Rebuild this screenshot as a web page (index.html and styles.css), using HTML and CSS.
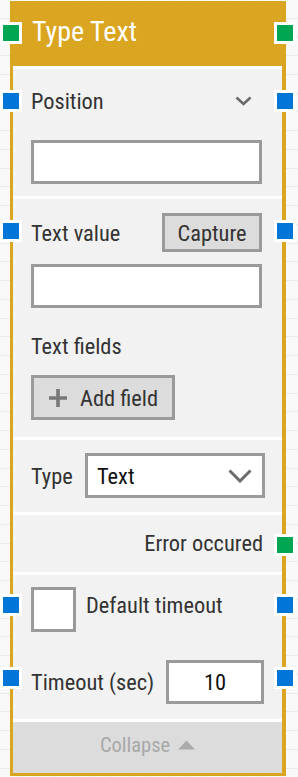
FILE: index.html
```html
<!DOCTYPE html>
<html lang="en">
<head>
<meta charset="utf-8">
<title>Type Text</title>
<link rel="stylesheet" href="styles.css">
</head>
<body>
<div class="node">
  <header class="node-head">
    <h1 class="node-title">Type Text</h1>
    <span class="port port-l port-green port-head"></span>
    <span class="port port-r port-green port-head"></span>
  </header>
  <div class="panel">
    <section class="row row-position">
      <div class="row-head">
        <span class="label">Position</span>
        <svg class="chev-small" width="17" height="10" viewBox="0 0 17 10"><polyline points="1.5,1.5 8.5,8 15.5,1.5" fill="none" stroke="#6b6b6b" stroke-width="2.6"/></svg>
      </div>
      <div class="input input-wide"></div>
      <span class="port port-l port-blue port-p1"></span>
      <span class="port port-r port-blue port-p1"></span>
    </section>

    <section class="row row-text">
      <div class="row-head row-head-btn">
        <span class="label">Text value</span>
        <span class="btn btn-capture">Capture</span>
      </div>
      <div class="input input-wide input-text"></div>
      <div class="label label-fields">Text fields</div>
      <span class="btn btn-add">
        <svg class="plus" width="20" height="20" viewBox="0 0 20 20"><path d="M10 1v18M1 10h18" stroke="#777" stroke-width="3.6" fill="none"/></svg>
        Add field
      </span>
      <span class="port port-l port-blue port-p1"></span>
      <span class="port port-r port-blue port-p1"></span>
    </section>

    <section class="row row-type">
      <span class="label">Type</span>
      <div class="select">
        <span class="select-value">Text</span>
        <svg width="24" height="14" viewBox="0 0 24 14"><polyline points="1.5,1.5 12,12 22.5,1.5" fill="none" stroke="#6b6b6b" stroke-width="3"/></svg>
      </div>
    </section>

    <section class="row row-error">
      <span class="label">Error occured</span>
      <span class="port port-r port-green port-err"></span>
    </section>

    <section class="row row-timeout">
      <div class="check-line">
        <span class="checkbox"></span>
        <span class="label label-check">Default timeout</span>
      </div>
      <div class="timeout-line">
        <span class="label">Timeout (sec)</span>
        <div class="input input-num">10</div>
      </div>
      <span class="port port-l port-blue port-t1"></span>
      <span class="port port-r port-blue port-t1"></span>
      <span class="port port-l port-blue port-t2"></span>
      <span class="port port-r port-blue port-t2"></span>
    </section>

    <footer class="row row-collapse">
      <span class="collapse-text">Collapse</span>
      <svg width="17" height="10" viewBox="0 0 17 10"><polygon points="0,9.5 8.5,0.5 17,9.5" fill="#ababab"/></svg>
    </footer>
  </div>
</div>
</body>
</html>
```

FILE: styles.css
```css
* { box-sizing: border-box; }

html, body {
  margin: 0;
  padding: 0;
}

body {
  width: 298px;
  height: 777px;
  overflow: hidden;
  background-color: #f9f9f9;
  background-image:
    repeating-linear-gradient(to bottom, transparent 0, transparent 17.75px, #ebebeb 17.75px, #ebebeb 18.75px),
    repeating-linear-gradient(to right, transparent 0, transparent 17.75px, #efefef 17.75px, #efefef 18.75px);
  font-family: Roboto, "Noto Sans", "Liberation Sans", sans-serif;
  font-stretch: condensed;
  color: #333;
}

.node {
  position: relative;
  margin: 1px 0 0 10px;
  width: 276px;
  border-left: 3px solid #daa520;
  border-right: 4px solid #daa520;
  border-bottom: 3px solid #daa520;
}

.node-head {
  position: relative;
  height: 65px;
  background: #daa520;
  display: flex;
  align-items: center;
  padding: 0 0 3px 19px;
}

.node-title {
  margin: 0;
  font-size: 28px;
  font-weight: 400;
  color: #fff;
  line-height: 32px;
}

.panel {
  background: #fff;
  display: flex;
  flex-direction: column;
  gap: 3px;
  padding-top: 3px;
}

.row {
  position: relative;
  background: #f2f2f2;
  padding: 0 20px 0 18px;
}

.label {
  font-size: 22.4px;
  line-height: 26px;
  color: #333;
  white-space: nowrap;
}

/* ports */
.port {
  position: absolute;
  width: 22px;
  height: 22px;
  border: 3px solid #fff;
}
.port-l { left: -13px; }
.port-r { right: -14px; }
.port-green { background: #00a651; }
.port-blue { background: #0275d8; }
.port-head { top: 21px; }
.port-p1 { top: 21px; }
.port-err { top: 19px; }
.port-t1 { top: 19px; }
.port-t2 { top: 92px; }

/* inputs */
.input {
  background: #fff;
  border: 3px solid #9a9a9a;
  height: 44px;
}
.input-wide { width: 231px; }

/* position row */
.row-position { padding-top: 19px; padding-bottom: 12px; }
.row-head {
  display: flex;
  align-items: center;
  justify-content: space-between;
  height: 26px;
}
.row-position .input { margin-top: 26px; }
.chev-small { margin-right: 10px; }

/* text row */
.row-text { padding-top: 14px; padding-bottom: 17px; }
.row-head-btn { height: 39px; }
.btn {
  display: flex;
  align-items: center;
  justify-content: center;
  background: #dcdcdc;
  border: 3px solid #9a9a9a;
  font-size: 22.4px;
  color: #333;
  white-space: nowrap;
}
.btn-capture { width: 100px; height: 39px; }
.input-text { margin-top: 12px; }
.label-fields { margin-top: 25px; }
.btn-add {
  margin-top: 16px;
  width: 144px;
  height: 45px;
  justify-content: flex-start;
  padding-left: 14px;
  gap: 12px;
}
.plus { flex: none; }

/* type row */
.row-type {
  display: flex;
  align-items: center;
  padding-top: 13px;
  padding-bottom: 14px;
  padding-right: 17px;
}
.select {
  margin-left: auto;
  width: 180px;
  height: 45px;
  background: #fff;
  border: 3px solid #9a9a9a;
  display: flex;
  align-items: center;
  justify-content: space-between;
  padding: 0 10px 0 9px;
}
.select-value { font-size: 22.4px; color: #111; }

/* error row */
.row-error {
  padding-top: 15px;
  padding-bottom: 16px;
  padding-right: 19px;
  text-align: right;
}
.row-error .label { display: block; }

/* timeout row */
.row-timeout { padding-top: 12px; padding-bottom: 15px; }
.check-line { display: flex; align-items: flex-start; gap: 10px; }
.checkbox {
  width: 45px;
  height: 45px;
  background: #fff;
  border: 3px solid #9a9a9a;
  flex: none;
}
.label-check { margin-top: 5px; }
.timeout-line {
  margin-top: 28px;
  display: flex;
  align-items: center;
  justify-content: space-between;
  margin-right: -2px;
}
.input-num {
  width: 98px;
  display: flex;
  align-items: center;
  justify-content: center;
  font-size: 22.4px;
  color: #111;
}

/* collapse */
.row-collapse {
  background: #dcdcdc;
  height: 51px;
  display: flex;
  align-items: center;
  justify-content: center;
  gap: 8px;
  padding: 0 0 5px 0;
}
.collapse-text { font-size: 20.5px; color: #a8a8a8; line-height: 26px; }
```
